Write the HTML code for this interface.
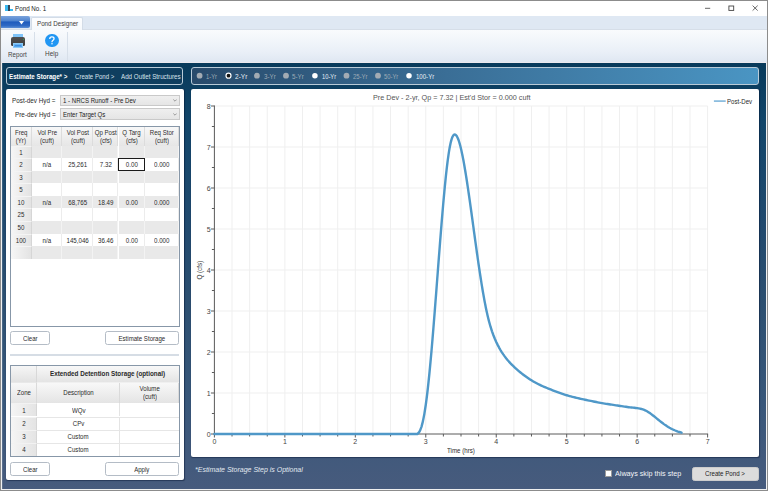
<!DOCTYPE html>
<html><head><meta charset="utf-8">
<style>
*{margin:0;padding:0;box-sizing:border-box}
html,body{width:768px;height:491px;overflow:hidden;background:#fff}
body{position:relative;font-family:"Liberation Sans",sans-serif;color:#333}
.a{position:absolute}
.t{position:absolute;white-space:nowrap;line-height:1;}
</style></head><body>
<div class="a" style="left:0.00px;top:0.00px;width:768.00px;height:491.00px;background:#8c8c8c"></div>
<div class="a" style="left:1.00px;top:1.00px;width:766.00px;height:489.00px;background:#f2f2f2"></div>
<div class="a" style="left:1.00px;top:1.00px;width:766.00px;height:15.00px;background:#fff"></div>
<div class="a" style="left:5.00px;top:5.00px;width:3.00px;height:6.00px;background:#3ab8ee"></div>
<div class="a" style="left:8.00px;top:5.00px;width:1.50px;height:6.00px;background:#33475a"></div>
<div class="a" style="left:9.50px;top:9.00px;width:3.00px;height:2.00px;background:#3ab8ee"></div>
<svg class="a" style="left:700px;top:0" width="68" height="16"><path d="M5 8.3H10.2" stroke="#555" stroke-width="0.9"/><rect x="28.9" y="6" width="4.8" height="4.4" fill="none" stroke="#444" stroke-width="0.9"/><path d="M52.6 5.6L57.7 10.6M57.7 5.6L52.6 10.6" stroke="#444" stroke-width="0.8"/></svg>
<div class="a" style="left:1.00px;top:16.00px;width:766.00px;height:13.00px;background:#dfe8f3"></div>
<div class="a" style="left:1.00px;top:16.00px;width:29.00px;height:12.30px;border-radius:0 2px 2px 0;background:linear-gradient(#7aa3dc 0%,#4f84cf 40%,#1e5bbd 50%,#2e69c4 80%,#5d8fd6 100%)"></div>
<svg class="a" style="left:18.5px;top:20.5px" width="5" height="4" viewBox="0 0 5 4"><path d="M0 0H5L2.5 3.5Z" fill="#fff"/></svg>
<div class="a" style="left:1.00px;top:29.00px;width:766.00px;height:33.00px;background:linear-gradient(#f9fbfd,#e9eff7 70%,#dfe7f2);border-top:1px solid #d6dee8"></div>
<div class="a" style="left:31.30px;top:16.60px;width:51.80px;height:13.40px;background:linear-gradient(#fdfeff,#f6f9fc);border:1px solid #d3dce7;border-bottom:none;border-radius:2px 2px 0 0"></div>
<div class="a" style="left:1.00px;top:61.50px;width:766.00px;height:1.50px;background:#ebe9ee"></div>
<div class="a" style="left:34.00px;top:32.00px;width:1.00px;height:29.00px;background:#d7dfe9"></div>
<div class="a" style="left:67.00px;top:32.00px;width:1.00px;height:29.00px;background:#d7dfe9"></div>
<div class="a" style="left:13.30px;top:34.10px;width:9.40px;height:4.20px;background:#80c4f8"></div>
<div class="a" style="left:10.90px;top:37.40px;width:14.25px;height:8.30px;background:linear-gradient(#505050,#3e3e3e);border-radius:2px 2px 1.5px 1.5px"></div>
<div class="a" style="left:23.00px;top:39.00px;width:1.10px;height:1.10px;background:#2fb050;border-radius:50%"></div>
<div class="a" style="left:13.10px;top:42.80px;width:9.80px;height:4.90px;background:linear-gradient(#6fb8f4,#4f9fea);border:0.6px solid #8ccbf8"></div>
<div class="a" style="left:14.80px;top:44.60px;width:6.40px;height:0.80px;background:#3d8fe0"></div>
<div class="a" style="left:45px;top:33.5px;width:13.6px;height:13.6px;border-radius:50%;background:#2196f3"></div>
<svg class="a" style="left:40px;top:30px" width="24" height="20" viewBox="40 30 24 20"><path d="M49.75 38.9C49.75 37.5 50.6 36.95 51.9 36.95C53.2 36.95 54.05 37.65 54.05 38.75C54.05 40 52 40.35 52 41.7V42.3" fill="none" stroke="#fff" stroke-width="1.25"/><circle cx="52" cy="43.85" r="0.75" fill="#fff"/></svg>
<div class="a" style="left:2.00px;top:63.00px;width:764.00px;height:425.70px;background:linear-gradient(#083a5b 0%,#12466a 14%,#224a6e 39%,#2c4f70 55%,#38577a 79%,#475b7d 100%)"></div>
<div class="a" style="left:2.00px;top:63.00px;width:1.00px;height:425.70px;background:rgba(255,255,255,0.13)"></div>
<div class="a" style="left:1.00px;top:488.70px;width:766.00px;height:1.00px;background:#f0f0f0"></div>
<div class="a" style="left:6.30px;top:67.20px;width:177.20px;height:17.90px;border:1px solid #b9cbd8;border-radius:3px;background:#0f3e5f"></div>
<div class="a" style="left:190.60px;top:67.10px;width:568.80px;height:18.00px;border:1px solid #b9cbd8;border-radius:3px;background:linear-gradient(90deg,#284a6b,#3a6e96 45%,#4a95c3)"></div>
<svg class="a" style="left:0;top:0" width="768" height="491"><circle cx="199.6" cy="75.7" r="2.9" fill="#a3abb3"/><circle cx="228.5" cy="75.7" r="2.5" fill="#151515" stroke="#fff" stroke-width="1.2"/><circle cx="256.9" cy="75.7" r="2.9" fill="#a3abb3"/><circle cx="286.0" cy="75.7" r="2.9" fill="#a3abb3"/><circle cx="314.9" cy="75.7" r="2.75" fill="#fff"/><circle cx="346.5" cy="75.7" r="2.9" fill="#a3abb3"/><circle cx="378.0" cy="75.7" r="2.9" fill="#a3abb3"/><circle cx="409.0" cy="75.7" r="2.75" fill="#fff"/></svg>
<div class="a" style="left:6.00px;top:89.00px;width:177.90px;height:391.40px;background:#fff;border-radius:2px;box-shadow:0.5px 0.6px 1px rgba(0,15,45,0.45)"></div>
<div class="a" style="left:190.90px;top:89.00px;width:568.10px;height:368.40px;background:#fff;border-radius:2px;box-shadow:0.5px 0.6px 1px rgba(0,15,45,0.45)"></div>
<div class="a" style="left:59.50px;top:94.80px;width:120.40px;height:11.10px;background:linear-gradient(#efefef,#e5e5e5);border:1px solid #c9c9c9"></div>
<svg class="a" style="left:172.5px;top:98.85px" width="4" height="3" viewBox="0 0 4 3"><path d="M0.3 0.5L2 2.2L3.7 0.5" fill="none" stroke="#777" stroke-width="0.7"/></svg>
<div class="a" style="left:59.50px;top:108.30px;width:120.40px;height:11.50px;background:linear-gradient(#efefef,#e5e5e5);border:1px solid #c9c9c9"></div>
<svg class="a" style="left:172.5px;top:112.55px" width="4" height="3" viewBox="0 0 4 3"><path d="M0.3 0.5L2 2.2L3.7 0.5" fill="none" stroke="#777" stroke-width="0.7"/></svg>
<div class="a" style="left:10.60px;top:126.00px;width:168.90px;height:201.00px;background:#fff"></div>
<div class="a" style="left:11.10px;top:127.00px;width:20.60px;height:18.60px;background:linear-gradient(#f8f8f8,#e6e6e6);border-right:1px solid #dcdcdc"></div>
<div class="a" style="left:31.70px;top:127.00px;width:30.60px;height:18.60px;background:linear-gradient(#f8f8f8,#e6e6e6);border-right:1px solid #dcdcdc"></div>
<div class="a" style="left:62.30px;top:127.00px;width:30.40px;height:18.60px;background:linear-gradient(#f8f8f8,#e6e6e6);border-right:1px solid #dcdcdc"></div>
<div class="a" style="left:92.70px;top:127.00px;width:25.80px;height:18.60px;background:linear-gradient(#f8f8f8,#e6e6e6);border-right:1px solid #dcdcdc"></div>
<div class="a" style="left:118.50px;top:127.00px;width:26.50px;height:18.60px;background:linear-gradient(#f8f8f8,#e6e6e6);border-right:1px solid #dcdcdc"></div>
<div class="a" style="left:145.00px;top:127.00px;width:34.00px;height:18.60px;background:linear-gradient(#f8f8f8,#e6e6e6);border-right:1px solid #dcdcdc"></div>
<div class="a" style="left:11.00px;top:145.60px;width:20.70px;height:12.57px;background:linear-gradient(90deg,#f6f6f6,#e3e3e3);border-right:1px solid #d6d6d6;border-top:1px solid #f4f4f4"></div>
<div class="a" style="left:31.70px;top:145.60px;width:30.60px;height:12.57px;background:#e9e9e9;border-right:1px solid #f3f3f3"></div>
<div class="a" style="left:62.30px;top:145.60px;width:30.40px;height:12.57px;background:#e9e9e9;border-right:1px solid #f3f3f3"></div>
<div class="a" style="left:92.70px;top:145.60px;width:25.80px;height:12.57px;background:#e9e9e9;border-right:1px solid #f3f3f3"></div>
<div class="a" style="left:118.50px;top:145.60px;width:26.50px;height:12.57px;background:#e9e9e9;border-right:1px solid #f3f3f3"></div>
<div class="a" style="left:145.00px;top:145.60px;width:34.00px;height:12.57px;background:#e9e9e9;border-right:1px solid #f3f3f3"></div>
<div class="a" style="left:11.00px;top:158.17px;width:20.70px;height:12.57px;background:linear-gradient(90deg,#f6f6f6,#e3e3e3);border-right:1px solid #d6d6d6;border-top:1px solid #f4f4f4"></div>
<div class="a" style="left:31.70px;top:158.17px;width:30.60px;height:12.57px;background:#fff;border-right:1px solid #ececec"></div>
<div class="a" style="left:62.30px;top:158.17px;width:30.40px;height:12.57px;background:#fff;border-right:1px solid #ececec"></div>
<div class="a" style="left:92.70px;top:158.17px;width:25.80px;height:12.57px;background:#fff;border-right:1px solid #ececec"></div>
<div class="a" style="left:118.50px;top:158.17px;width:26.50px;height:12.57px;background:#fff;border-right:1px solid #ececec"></div>
<div class="a" style="left:145.00px;top:158.17px;width:34.00px;height:12.57px;background:#fff;border-right:1px solid #ececec"></div>
<div class="a" style="left:11.00px;top:170.74px;width:20.70px;height:12.57px;background:linear-gradient(90deg,#f6f6f6,#e3e3e3);border-right:1px solid #d6d6d6;border-top:1px solid #f4f4f4"></div>
<div class="a" style="left:31.70px;top:170.74px;width:30.60px;height:12.57px;background:#e9e9e9;border-right:1px solid #f3f3f3"></div>
<div class="a" style="left:62.30px;top:170.74px;width:30.40px;height:12.57px;background:#e9e9e9;border-right:1px solid #f3f3f3"></div>
<div class="a" style="left:92.70px;top:170.74px;width:25.80px;height:12.57px;background:#e9e9e9;border-right:1px solid #f3f3f3"></div>
<div class="a" style="left:118.50px;top:170.74px;width:26.50px;height:12.57px;background:#e9e9e9;border-right:1px solid #f3f3f3"></div>
<div class="a" style="left:145.00px;top:170.74px;width:34.00px;height:12.57px;background:#e9e9e9;border-right:1px solid #f3f3f3"></div>
<div class="a" style="left:11.00px;top:183.31px;width:20.70px;height:12.57px;background:linear-gradient(90deg,#f6f6f6,#e3e3e3);border-right:1px solid #d6d6d6;border-top:1px solid #f4f4f4"></div>
<div class="a" style="left:31.70px;top:183.31px;width:30.60px;height:12.57px;background:#fff;border-right:1px solid #ececec"></div>
<div class="a" style="left:62.30px;top:183.31px;width:30.40px;height:12.57px;background:#fff;border-right:1px solid #ececec"></div>
<div class="a" style="left:92.70px;top:183.31px;width:25.80px;height:12.57px;background:#fff;border-right:1px solid #ececec"></div>
<div class="a" style="left:118.50px;top:183.31px;width:26.50px;height:12.57px;background:#fff;border-right:1px solid #ececec"></div>
<div class="a" style="left:145.00px;top:183.31px;width:34.00px;height:12.57px;background:#fff;border-right:1px solid #ececec"></div>
<div class="a" style="left:11.00px;top:195.88px;width:20.70px;height:12.57px;background:linear-gradient(90deg,#f6f6f6,#e3e3e3);border-right:1px solid #d6d6d6;border-top:1px solid #f4f4f4"></div>
<div class="a" style="left:31.70px;top:195.88px;width:30.60px;height:12.57px;background:#e9e9e9;border-right:1px solid #f3f3f3"></div>
<div class="a" style="left:62.30px;top:195.88px;width:30.40px;height:12.57px;background:#e9e9e9;border-right:1px solid #f3f3f3"></div>
<div class="a" style="left:92.70px;top:195.88px;width:25.80px;height:12.57px;background:#e9e9e9;border-right:1px solid #f3f3f3"></div>
<div class="a" style="left:118.50px;top:195.88px;width:26.50px;height:12.57px;background:#e9e9e9;border-right:1px solid #f3f3f3"></div>
<div class="a" style="left:145.00px;top:195.88px;width:34.00px;height:12.57px;background:#e9e9e9;border-right:1px solid #f3f3f3"></div>
<div class="a" style="left:11.00px;top:208.45px;width:20.70px;height:12.57px;background:linear-gradient(90deg,#f6f6f6,#e3e3e3);border-right:1px solid #d6d6d6;border-top:1px solid #f4f4f4"></div>
<div class="a" style="left:31.70px;top:208.45px;width:30.60px;height:12.57px;background:#fff;border-right:1px solid #ececec"></div>
<div class="a" style="left:62.30px;top:208.45px;width:30.40px;height:12.57px;background:#fff;border-right:1px solid #ececec"></div>
<div class="a" style="left:92.70px;top:208.45px;width:25.80px;height:12.57px;background:#fff;border-right:1px solid #ececec"></div>
<div class="a" style="left:118.50px;top:208.45px;width:26.50px;height:12.57px;background:#fff;border-right:1px solid #ececec"></div>
<div class="a" style="left:145.00px;top:208.45px;width:34.00px;height:12.57px;background:#fff;border-right:1px solid #ececec"></div>
<div class="a" style="left:11.00px;top:221.02px;width:20.70px;height:12.57px;background:linear-gradient(90deg,#f6f6f6,#e3e3e3);border-right:1px solid #d6d6d6;border-top:1px solid #f4f4f4"></div>
<div class="a" style="left:31.70px;top:221.02px;width:30.60px;height:12.57px;background:#e9e9e9;border-right:1px solid #f3f3f3"></div>
<div class="a" style="left:62.30px;top:221.02px;width:30.40px;height:12.57px;background:#e9e9e9;border-right:1px solid #f3f3f3"></div>
<div class="a" style="left:92.70px;top:221.02px;width:25.80px;height:12.57px;background:#e9e9e9;border-right:1px solid #f3f3f3"></div>
<div class="a" style="left:118.50px;top:221.02px;width:26.50px;height:12.57px;background:#e9e9e9;border-right:1px solid #f3f3f3"></div>
<div class="a" style="left:145.00px;top:221.02px;width:34.00px;height:12.57px;background:#e9e9e9;border-right:1px solid #f3f3f3"></div>
<div class="a" style="left:11.00px;top:233.59px;width:20.70px;height:12.57px;background:linear-gradient(90deg,#f6f6f6,#e3e3e3);border-right:1px solid #d6d6d6;border-top:1px solid #f4f4f4"></div>
<div class="a" style="left:31.70px;top:233.59px;width:30.60px;height:12.57px;background:#fff;border-right:1px solid #ececec"></div>
<div class="a" style="left:62.30px;top:233.59px;width:30.40px;height:12.57px;background:#fff;border-right:1px solid #ececec"></div>
<div class="a" style="left:92.70px;top:233.59px;width:25.80px;height:12.57px;background:#fff;border-right:1px solid #ececec"></div>
<div class="a" style="left:118.50px;top:233.59px;width:26.50px;height:12.57px;background:#fff;border-right:1px solid #ececec"></div>
<div class="a" style="left:145.00px;top:233.59px;width:34.00px;height:12.57px;background:#fff;border-right:1px solid #ececec"></div>
<div class="a" style="left:11.00px;top:246.16px;width:20.70px;height:12.57px;background:linear-gradient(90deg,#f6f6f6,#e3e3e3);border-right:1px solid #d6d6d6;border-top:1px solid #f4f4f4"></div>
<div class="a" style="left:31.70px;top:246.16px;width:30.60px;height:12.57px;background:#e9e9e9;border-right:1px solid #f3f3f3"></div>
<div class="a" style="left:62.30px;top:246.16px;width:30.40px;height:12.57px;background:#e9e9e9;border-right:1px solid #f3f3f3"></div>
<div class="a" style="left:92.70px;top:246.16px;width:25.80px;height:12.57px;background:#e9e9e9;border-right:1px solid #f3f3f3"></div>
<div class="a" style="left:118.50px;top:246.16px;width:26.50px;height:12.57px;background:#e9e9e9;border-right:1px solid #f3f3f3"></div>
<div class="a" style="left:145.00px;top:246.16px;width:34.00px;height:12.57px;background:#e9e9e9;border-right:1px solid #f3f3f3"></div>
<div class="a" style="left:10.00px;top:126.00px;width:170.00px;height:201.00px;border:1px solid #8797a8"></div>
<div class="a" style="left:118.40px;top:158.00px;width:26.90px;height:13.30px;border:1.5px solid #1a1a1a"></div>
<div class="a" style="left:10.30px;top:331.20px;width:39.40px;height:13.50px;background:#fff;border:1px solid #b4bcc6;border-radius:2.5px"></div>
<div class="a" style="left:105.00px;top:331.20px;width:74.40px;height:13.50px;background:#fff;border:1px solid #b4bcc6;border-radius:2.5px"></div>
<div class="a" style="left:10.20px;top:354.20px;width:169.20px;height:2.10px;background:#d6dde5"></div>
<div class="a" style="left:10.40px;top:365.00px;width:169.10px;height:91.90px;background:#fff"></div>
<div class="a" style="left:10.90px;top:365.50px;width:25.70px;height:17.10px;background:linear-gradient(#f6f6f6,#e2e2e2);border-right:1px solid #d8d8d8;border-bottom:1px solid #e8e8e8"></div>
<div class="a" style="left:36.60px;top:365.50px;width:142.40px;height:17.10px;background:linear-gradient(#f8f8f8,#e4e4e4);border-bottom:1px solid #f0f0f0"></div>
<div class="a" style="left:10.90px;top:382.60px;width:25.70px;height:20.80px;background:linear-gradient(#f8f8f8,#e4e4e4);border-right:1px solid #dadada"></div>
<div class="a" style="left:36.60px;top:382.60px;width:83.80px;height:20.80px;background:linear-gradient(#f8f8f8,#e4e4e4);border-right:1px solid #dadada"></div>
<div class="a" style="left:120.40px;top:382.60px;width:58.60px;height:20.80px;background:linear-gradient(#f8f8f8,#e4e4e4);border-right:1px solid #dadada"></div>
<div class="a" style="left:10.90px;top:403.40px;width:25.70px;height:13.10px;background:linear-gradient(90deg,#f5f5f5,#e4e4e4);border-right:1px solid #d6d6d6;border-top:1px solid #f2f2f2"></div>
<div class="a" style="left:36.60px;top:403.40px;width:83.80px;height:13.10px;border-right:1px solid #e4e4e4"></div>
<div class="a" style="left:10.90px;top:416.50px;width:25.70px;height:13.10px;background:linear-gradient(90deg,#f5f5f5,#e4e4e4);border-right:1px solid #d6d6d6;border-top:1px solid #f2f2f2"></div>
<div class="a" style="left:36.60px;top:416.50px;width:83.80px;height:13.10px;border-right:1px solid #e4e4e4;border-top:1px solid #e6e6e6"></div>
<div class="a" style="left:120.40px;top:416.50px;width:58.60px;height:13.10px;border-top:1px solid #e6e6e6"></div>
<div class="a" style="left:10.90px;top:429.60px;width:25.70px;height:13.10px;background:linear-gradient(90deg,#f5f5f5,#e4e4e4);border-right:1px solid #d6d6d6;border-top:1px solid #f2f2f2"></div>
<div class="a" style="left:36.60px;top:429.60px;width:83.80px;height:13.10px;border-right:1px solid #e4e4e4;border-top:1px solid #e6e6e6"></div>
<div class="a" style="left:120.40px;top:429.60px;width:58.60px;height:13.10px;border-top:1px solid #e6e6e6"></div>
<div class="a" style="left:10.90px;top:442.70px;width:25.70px;height:13.70px;background:linear-gradient(90deg,#f5f5f5,#e4e4e4);border-right:1px solid #d6d6d6;border-top:1px solid #f2f2f2"></div>
<div class="a" style="left:36.60px;top:442.70px;width:83.80px;height:13.10px;border-right:1px solid #e4e4e4;border-top:1px solid #e6e6e6"></div>
<div class="a" style="left:120.40px;top:442.70px;width:58.60px;height:13.10px;border-top:1px solid #e6e6e6"></div>
<div class="a" style="left:10.00px;top:365.00px;width:170.00px;height:92.00px;border:1px solid #8797a8"></div>
<div class="a" style="left:10.30px;top:462.40px;width:39.40px;height:13.20px;background:#fff;border:1px solid #b4bcc6;border-radius:2.5px"></div>
<div class="a" style="left:105.00px;top:462.40px;width:74.40px;height:13.20px;background:#fff;border:1px solid #b4bcc6;border-radius:2.5px"></div>
<svg class="a" style="left:0;top:0" width="768" height="491"><path d="M232.02 106.00V434.00 M249.63 106.00V434.00 M267.25 106.00V434.00 M284.86 106.00V434.00 M302.48 106.00V434.00 M320.09 106.00V434.00 M337.70 106.00V434.00 M355.32 106.00V434.00 M372.94 106.00V434.00 M390.55 106.00V434.00 M408.16 106.00V434.00 M425.78 106.00V434.00 M443.39 106.00V434.00 M461.01 106.00V434.00 M478.62 106.00V434.00 M496.24 106.00V434.00 M513.86 106.00V434.00 M531.47 106.00V434.00 M549.08 106.00V434.00 M566.70 106.00V434.00 M584.31 106.00V434.00 M601.93 106.00V434.00 M619.54 106.00V434.00 M637.16 106.00V434.00 M654.77 106.00V434.00 M672.39 106.00V434.00 M690.00 106.00V434.00 M707.62 106.00V434.00 M214.40 393.00H707.62 M214.40 352.00H707.62 M214.40 311.00H707.62 M214.40 270.00H707.62 M214.40 229.00H707.62 M214.40 188.00H707.62 M214.40 147.00H707.62 M214.40 106.00H707.62" stroke="#efefef" stroke-width="1" fill="none"/><path d="M214.40 105.50V434.50 M213.90 434.00H708.12 M214.40 434.00v3.5 M232.02 434.00v2.5 M249.63 434.00v2.5 M267.25 434.00v2.5 M284.86 434.00v3.5 M302.48 434.00v2.5 M320.09 434.00v2.5 M337.70 434.00v2.5 M355.32 434.00v3.5 M372.94 434.00v2.5 M390.55 434.00v2.5 M408.16 434.00v2.5 M425.78 434.00v3.5 M443.39 434.00v2.5 M461.01 434.00v2.5 M478.62 434.00v2.5 M496.24 434.00v3.5 M513.86 434.00v2.5 M531.47 434.00v2.5 M549.08 434.00v2.5 M566.70 434.00v3.5 M584.31 434.00v2.5 M601.93 434.00v2.5 M619.54 434.00v2.5 M637.16 434.00v3.5 M654.77 434.00v2.5 M672.39 434.00v2.5 M690.00 434.00v2.5 M707.62 434.00v3.5 M214.40 434.00h-3.5 M214.40 413.50h-2.5 M214.40 393.00h-3.5 M214.40 372.50h-2.5 M214.40 352.00h-3.5 M214.40 331.50h-2.5 M214.40 311.00h-3.5 M214.40 290.50h-2.5 M214.40 270.00h-3.5 M214.40 249.50h-2.5 M214.40 229.00h-3.5 M214.40 208.50h-2.5 M214.40 188.00h-3.5 M214.40 167.50h-2.5 M214.40 147.00h-3.5 M214.40 126.50h-2.5 M214.40 106.00h-3.5" stroke="#5a5a5a" stroke-width="1" fill="none"/><path d="M214.4 434.0 L397.60 433.99 L399.01 433.98 L400.41 433.97 L401.82 433.97 L403.23 433.97 L404.64 433.99 L406.05 434.00 L407.46 434.00 L408.87 434.00 L410.28 434.00 L411.69 434.00 L413.10 434.00 L414.51 434.00 L415.92 434.00 L417.32 434.00 L418.73 432.77 L420.14 430.39 L421.55 426.58 L422.96 421.13 L424.37 413.87 L425.78 404.78 L426.20 401.69 L426.63 398.45 L427.05 395.06 L427.47 391.51 L427.89 387.81 L428.32 383.96 L428.74 379.97 L429.16 375.84 L429.58 371.58 L430.01 367.19 L430.43 362.68 L430.85 358.05 L431.28 353.32 L431.70 348.48 L432.12 343.55 L432.54 338.53 L432.97 333.43 L433.39 328.25 L433.81 323.01 L434.24 317.71 L434.66 312.35 L435.08 306.95 L435.50 301.51 L435.93 296.04 L436.35 290.54 L436.77 285.02 L437.19 279.49 L437.62 273.97 L438.04 268.44 L438.46 262.93 L438.89 257.43 L439.31 251.97 L439.73 246.54 L440.15 241.15 L440.58 235.81 L441.00 230.52 L441.42 225.31 L441.84 220.16 L442.27 215.10 L442.69 210.12 L443.11 205.24 L443.54 200.47 L443.96 195.81 L444.38 191.27 L444.80 186.85 L445.23 182.57 L445.65 178.44 L446.07 174.46 L446.50 170.63 L446.92 166.98 L447.34 163.49 L447.76 160.18 L448.19 157.07 L448.61 154.14 L449.03 151.41 L449.45 148.88 L449.88 146.56 L450.30 144.44 L450.72 142.54 L451.15 140.85 L451.57 139.38 L451.99 138.11 L452.41 137.05 L452.84 136.19 L453.26 135.51 L453.68 135.01 L454.10 134.68 L454.53 134.52 L454.95 134.52 L455.37 134.67 L455.80 134.97 L456.22 135.41 L456.64 135.98 L457.06 136.68 L457.49 137.51 L457.91 138.46 L458.33 139.52 L458.76 140.70 L459.18 142.00 L459.60 143.40 L460.02 144.90 L460.45 146.51 L460.87 148.22 L461.29 150.02 L461.71 151.91 L462.14 153.90 L462.56 155.96 L462.98 158.11 L463.41 160.33 L463.83 162.63 L464.25 165.00 L464.67 167.43 L465.10 169.93 L465.52 172.49 L465.94 175.11 L466.36 177.78 L466.79 180.50 L467.21 183.26 L467.63 186.07 L468.06 188.92 L468.48 191.80 L468.90 194.72 L469.32 197.67 L469.75 200.65 L470.17 203.65 L470.59 206.67 L471.02 209.71 L471.44 212.77 L471.86 215.85 L472.28 218.93 L472.71 222.02 L473.13 225.11 L473.55 228.21 L473.97 231.31 L474.40 234.40 L474.82 237.48 L475.24 240.56 L475.67 243.62 L476.09 246.67 L476.51 249.70 L476.93 252.71 L477.36 255.70 L477.78 258.67 L478.20 261.60 L478.62 264.51 L479.05 267.38 L479.47 270.22 L479.89 273.02 L480.32 275.78 L480.74 278.50 L481.16 281.18 L481.58 283.82 L482.01 286.41 L482.43 288.95 L482.85 291.45 L483.28 293.89 L483.70 296.29 L484.12 298.62 L484.54 300.91 L484.97 303.13 L485.39 305.30 L485.81 307.40 L486.23 309.44 L486.66 311.42 L487.08 313.34 L487.50 315.20 L487.93 316.99 L488.35 318.72 L488.77 320.39 L489.19 322.00 L490.60 326.96 L492.01 331.36 L493.42 335.28 L494.83 338.78 L496.24 341.95 L497.65 344.86 L499.06 347.54 L500.47 350.01 L501.88 352.30 L503.29 354.42 L504.70 356.39 L506.10 358.23 L507.51 359.95 L508.92 361.57 L510.33 363.09 L511.74 364.54 L513.15 365.93 L514.56 367.27 L515.97 368.57 L517.38 369.83 L518.79 371.05 L520.20 372.24 L521.61 373.38 L523.01 374.49 L524.42 375.56 L525.83 376.59 L527.24 377.58 L528.65 378.54 L530.06 379.46 L531.47 380.35 L532.88 381.20 L534.29 382.01 L535.70 382.79 L537.11 383.54 L538.52 384.26 L539.93 384.95 L541.33 385.60 L542.74 386.23 L544.15 386.84 L545.56 387.43 L546.97 388.01 L548.38 388.58 L549.79 389.15 L551.20 389.71 L552.61 390.26 L554.02 390.81 L555.43 391.35 L556.84 391.88 L558.24 392.40 L559.65 392.91 L561.06 393.40 L562.47 393.89 L563.88 394.35 L565.29 394.80 L566.70 395.24 L568.11 395.66 L569.52 396.06 L570.93 396.44 L572.34 396.81 L573.75 397.17 L575.16 397.51 L576.56 397.85 L577.97 398.17 L579.38 398.49 L580.79 398.80 L582.20 399.11 L583.61 399.41 L585.02 399.71 L586.43 400.01 L587.84 400.31 L589.25 400.61 L590.66 400.90 L592.07 401.19 L593.47 401.48 L594.88 401.76 L596.29 402.04 L597.70 402.31 L599.11 402.58 L600.52 402.84 L601.93 403.09 L603.34 403.34 L604.75 403.58 L606.16 403.81 L607.57 404.03 L608.98 404.25 L610.39 404.47 L611.79 404.68 L613.20 404.89 L614.61 405.10 L616.02 405.32 L617.43 405.53 L618.84 405.74 L620.25 405.96 L621.66 406.17 L623.07 406.39 L624.48 406.60 L625.89 406.81 L627.30 407.01 L628.70 407.19 L630.11 407.36 L631.52 407.51 L632.93 407.65 L634.34 407.79 L635.75 407.95 L637.16 408.13 L638.57 408.35 L639.98 408.62 L641.39 408.96 L642.80 409.38 L644.21 409.90 L645.62 410.54 L647.02 411.29 L648.43 412.15 L649.84 413.10 L651.25 414.11 L652.66 415.19 L654.07 416.30 L655.48 417.43 L656.89 418.58 L658.30 419.72 L659.71 420.86 L661.12 421.97 L662.53 423.06 L663.93 424.11 L665.34 425.11 L666.75 426.06 L668.16 426.96 L669.57 427.79 L670.98 428.57 L672.39 429.28 L673.80 429.92 L675.21 430.50 L676.62 431.03 L678.03 431.53 L679.44 431.99 L680.85 432.44 L681.55 432.66" stroke="#4f98c8" stroke-width="2.4" fill="none" stroke-linejoin="round" stroke-linecap="round"/><path d="M713.9 101.1H725.7" stroke="#7fb6dc" stroke-width="1.6"/></svg>
<div class="a" style="left:604.70px;top:469.70px;width:7.00px;height:6.90px;background:#fff;border:1px solid #9a9a9a"></div>
<div class="a" style="left:692.10px;top:466.60px;width:67.00px;height:14.90px;background:#dcdcdc;border:1px solid #cccccc;border-radius:2.5px"></div>
<div class="t" style="left:15.10px;transform:scaleX(0.8934);transform-origin:0 0;top:5px;font-size:7px;letter-spacing:0.000px;color:#1a1a1a;font-weight:normal;font-style:normal;">Pond No. 1</div>
<div class="t" style="left:36.70px;transform:scaleX(0.8893);transform-origin:0 0;top:20px;font-size:7px;letter-spacing:0.000px;color:#3a3a3a;font-weight:normal;font-style:normal;">Pond Designer</div>
<div class="t" style="left:8.20px;transform:scaleX(0.8942);transform-origin:0 0;top:51px;font-size:7px;letter-spacing:0.000px;color:#444;font-weight:normal;font-style:normal;">Report</div>
<div class="t" style="left:44.88px;transform:scaleX(0.9202);transform-origin:0 0;top:50px;font-size:7px;letter-spacing:0.000px;color:#444;font-weight:normal;font-style:normal;">Help</div>
<div class="t" style="left:9.38px;transform:scaleX(0.8846);transform-origin:0 0;top:73px;font-size:7px;letter-spacing:0.000px;color:#fff;font-weight:bold;font-style:normal;">Estimate Storage* &gt;</div>
<div class="t" style="left:74.50px;transform:scaleX(0.8684);transform-origin:0 0;top:73px;font-size:7px;letter-spacing:0.000px;color:#d8e2ec;font-weight:normal;font-style:normal;">Create Pond &gt;</div>
<div class="t" style="left:121.20px;transform:scaleX(0.8904);transform-origin:0 0;top:73px;font-size:7px;letter-spacing:0.000px;color:#d8e2ec;font-weight:normal;font-style:normal;">Add Outlet Structures</div>
<div class="t" style="left:206.49px;transform:scaleX(0.8808);transform-origin:0 0;top:74px;font-size:6.6px;letter-spacing:0.000px;color:#9eabb6;font-weight:normal;font-style:normal;">1-Yr</div>
<div class="t" style="left:234.67px;transform:scaleX(0.9956);transform-origin:0 0;top:74px;font-size:6.6px;letter-spacing:0.000px;color:#e6eef5;font-weight:normal;font-style:normal;">2-Yr</div>
<div class="t" style="left:263.81px;transform:scaleX(0.9438);transform-origin:0 0;top:74px;font-size:6.6px;letter-spacing:0.000px;color:#9eabb6;font-weight:normal;font-style:normal;">3-Yr</div>
<div class="t" style="left:292.25px;transform:scaleX(0.9490);transform-origin:0 0;top:74px;font-size:6.6px;letter-spacing:0.000px;color:#9eabb6;font-weight:normal;font-style:normal;">5-Yr</div>
<div class="t" style="left:321.79px;transform:scaleX(0.8787);transform-origin:0 0;top:74px;font-size:6.6px;letter-spacing:0.000px;color:#e6eef5;font-weight:normal;font-style:normal;">10-Yr</div>
<div class="t" style="left:352.60px;transform:scaleX(0.9031);transform-origin:0 0;top:74px;font-size:6.6px;letter-spacing:0.000px;color:#9eabb6;font-weight:normal;font-style:normal;">25-Yr</div>
<div class="t" style="left:384.17px;transform:scaleX(0.8867);transform-origin:0 0;top:74px;font-size:6.6px;letter-spacing:0.000px;color:#9eabb6;font-weight:normal;font-style:normal;">50-Yr</div>
<div class="t" style="left:415.88px;transform:scaleX(0.9189);transform-origin:0 0;top:74px;font-size:6.6px;letter-spacing:0.000px;color:#e6eef5;font-weight:normal;font-style:normal;">100-Yr</div>
<div class="t" style="left:12.39px;transform:scaleX(0.9576);transform-origin:0 0;top:98px;font-size:6.6px;letter-spacing:0.000px;color:#2a2a2a;font-weight:normal;font-style:normal;">Post-dev Hyd =</div>
<div class="t" style="left:14.99px;transform:scaleX(0.9627);transform-origin:0 0;top:112px;font-size:6.6px;letter-spacing:0.000px;color:#2a2a2a;font-weight:normal;font-style:normal;">Pre-dev Hyd =</div>
<div class="t" style="left:62.77px;transform:scaleX(0.9219);transform-origin:0 0;top:98px;font-size:6.6px;letter-spacing:0.000px;color:#222;font-weight:normal;font-style:normal;">1 - NRCS Runoff - Pre Dev</div>
<div class="t" style="left:62.71px;transform:scaleX(0.9188);transform-origin:0 0;top:112px;font-size:6.6px;letter-spacing:0.000px;color:#222;font-weight:normal;font-style:normal;">Enter Target Qs</div>
<div class="t" style="left:13.95px;transform:scaleX(0.87);transform-origin:7.20px 0;top:129px;font-size:7px;letter-spacing:0.000px;color:#2e2e2e;font-weight:normal;font-style:normal;">Freq</div>
<div class="t" style="left:15.32px;transform:scaleX(0.87);transform-origin:5.83px 0;top:137px;font-size:7px;letter-spacing:0.000px;color:#2e2e2e;font-weight:normal;font-style:normal;">(Yr)</div>
<div class="t" style="left:35.72px;transform:scaleX(0.87);transform-origin:11.28px 0;top:129px;font-size:7px;letter-spacing:0.000px;color:#2e2e2e;font-weight:normal;font-style:normal;">Vol Pre</div>
<div class="t" style="left:39.03px;transform:scaleX(0.87);transform-origin:7.97px 0;top:137px;font-size:7px;letter-spacing:0.000px;color:#2e2e2e;font-weight:normal;font-style:normal;">(cuft)</div>
<div class="t" style="left:64.66px;transform:scaleX(0.87);transform-origin:12.84px 0;top:129px;font-size:7px;letter-spacing:0.000px;color:#2e2e2e;font-weight:normal;font-style:normal;">Vol Post</div>
<div class="t" style="left:69.53px;transform:scaleX(0.87);transform-origin:7.97px 0;top:137px;font-size:7px;letter-spacing:0.000px;color:#2e2e2e;font-weight:normal;font-style:normal;">(cuft)</div>
<div class="t" style="left:92.96px;transform:scaleX(0.87);transform-origin:12.64px 0;top:129px;font-size:7px;letter-spacing:0.000px;color:#2e2e2e;font-weight:normal;font-style:normal;">Qp Post</div>
<div class="t" style="left:98.80px;transform:scaleX(0.87);transform-origin:6.80px 0;top:137px;font-size:7px;letter-spacing:0.000px;color:#2e2e2e;font-weight:normal;font-style:normal;">(cfs)</div>
<div class="t" style="left:121.25px;transform:scaleX(0.87);transform-origin:10.50px 0;top:129px;font-size:7px;letter-spacing:0.000px;color:#2e2e2e;font-weight:normal;font-style:normal;">Q Targ</div>
<div class="t" style="left:124.95px;transform:scaleX(0.87);transform-origin:6.80px 0;top:137px;font-size:7px;letter-spacing:0.000px;color:#2e2e2e;font-weight:normal;font-style:normal;">(cfs)</div>
<div class="t" style="left:148.44px;transform:scaleX(0.87);transform-origin:13.81px 0;top:129px;font-size:7px;letter-spacing:0.000px;color:#2e2e2e;font-weight:normal;font-style:normal;">Req Stor</div>
<div class="t" style="left:154.28px;transform:scaleX(0.87);transform-origin:7.97px 0;top:137px;font-size:7px;letter-spacing:0.000px;color:#2e2e2e;font-weight:normal;font-style:normal;">(cuft)</div>
<div class="t" style="left:19.20px;transform:scaleX(0.88);transform-origin:1.95px 0;top:149px;font-size:7px;letter-spacing:0.000px;color:#2a2a2a;font-weight:normal;font-style:normal;">1</div>
<div class="t" style="left:19.20px;transform:scaleX(0.88);transform-origin:1.95px 0;top:161px;font-size:7px;letter-spacing:0.000px;color:#2a2a2a;font-weight:normal;font-style:normal;">2</div>
<div class="t" style="left:42.13px;transform:scaleX(0.88);transform-origin:4.87px 0;top:161px;font-size:7px;letter-spacing:0.000px;color:#2a2a2a;font-weight:normal;font-style:normal;">n/a</div>
<div class="t" style="left:66.79px;transform:scaleX(0.88);transform-origin:10.71px 0;top:161px;font-size:7px;letter-spacing:0.000px;color:#2a2a2a;font-weight:normal;font-style:normal;">25,261</div>
<div class="t" style="left:98.79px;transform:scaleX(0.88);transform-origin:6.81px 0;top:161px;font-size:7px;letter-spacing:0.000px;color:#2a2a2a;font-weight:normal;font-style:normal;">7.32</div>
<div class="t" style="left:124.94px;transform:scaleX(0.88);transform-origin:6.81px 0;top:161px;font-size:7px;letter-spacing:0.000px;color:#2a2a2a;font-weight:normal;font-style:normal;">0.00</div>
<div class="t" style="left:153.49px;transform:scaleX(0.88);transform-origin:8.76px 0;top:161px;font-size:7px;letter-spacing:0.000px;color:#2a2a2a;font-weight:normal;font-style:normal;">0.000</div>
<div class="t" style="left:19.20px;transform:scaleX(0.88);transform-origin:1.95px 0;top:174px;font-size:7px;letter-spacing:0.000px;color:#2a2a2a;font-weight:normal;font-style:normal;">3</div>
<div class="t" style="left:19.20px;transform:scaleX(0.88);transform-origin:1.95px 0;top:186px;font-size:7px;letter-spacing:0.000px;color:#2a2a2a;font-weight:normal;font-style:normal;">5</div>
<div class="t" style="left:17.26px;transform:scaleX(0.88);transform-origin:3.89px 0;top:199px;font-size:7px;letter-spacing:0.000px;color:#2a2a2a;font-weight:normal;font-style:normal;">10</div>
<div class="t" style="left:42.13px;transform:scaleX(0.88);transform-origin:4.87px 0;top:199px;font-size:7px;letter-spacing:0.000px;color:#2a2a2a;font-weight:normal;font-style:normal;">n/a</div>
<div class="t" style="left:66.79px;transform:scaleX(0.88);transform-origin:10.71px 0;top:199px;font-size:7px;letter-spacing:0.000px;color:#2a2a2a;font-weight:normal;font-style:normal;">68,765</div>
<div class="t" style="left:96.84px;transform:scaleX(0.88);transform-origin:8.76px 0;top:199px;font-size:7px;letter-spacing:0.000px;color:#2a2a2a;font-weight:normal;font-style:normal;">18.49</div>
<div class="t" style="left:124.94px;transform:scaleX(0.88);transform-origin:6.81px 0;top:199px;font-size:7px;letter-spacing:0.000px;color:#2a2a2a;font-weight:normal;font-style:normal;">0.00</div>
<div class="t" style="left:153.49px;transform:scaleX(0.88);transform-origin:8.76px 0;top:199px;font-size:7px;letter-spacing:0.000px;color:#2a2a2a;font-weight:normal;font-style:normal;">0.000</div>
<div class="t" style="left:17.26px;transform:scaleX(0.88);transform-origin:3.89px 0;top:211px;font-size:7px;letter-spacing:0.000px;color:#2a2a2a;font-weight:normal;font-style:normal;">25</div>
<div class="t" style="left:17.26px;transform:scaleX(0.88);transform-origin:3.89px 0;top:224px;font-size:7px;letter-spacing:0.000px;color:#2a2a2a;font-weight:normal;font-style:normal;">50</div>
<div class="t" style="left:15.31px;transform:scaleX(0.88);transform-origin:5.84px 0;top:237px;font-size:7px;letter-spacing:0.000px;color:#2a2a2a;font-weight:normal;font-style:normal;">100</div>
<div class="t" style="left:42.13px;transform:scaleX(0.88);transform-origin:4.87px 0;top:237px;font-size:7px;letter-spacing:0.000px;color:#2a2a2a;font-weight:normal;font-style:normal;">n/a</div>
<div class="t" style="left:64.85px;transform:scaleX(0.88);transform-origin:12.65px 0;top:237px;font-size:7px;letter-spacing:0.000px;color:#2a2a2a;font-weight:normal;font-style:normal;">145,046</div>
<div class="t" style="left:96.84px;transform:scaleX(0.88);transform-origin:8.76px 0;top:237px;font-size:7px;letter-spacing:0.000px;color:#2a2a2a;font-weight:normal;font-style:normal;">36.46</div>
<div class="t" style="left:124.94px;transform:scaleX(0.88);transform-origin:6.81px 0;top:237px;font-size:7px;letter-spacing:0.000px;color:#2a2a2a;font-weight:normal;font-style:normal;">0.00</div>
<div class="t" style="left:153.49px;transform:scaleX(0.88);transform-origin:8.76px 0;top:237px;font-size:7px;letter-spacing:0.000px;color:#2a2a2a;font-weight:normal;font-style:normal;">0.000</div>
<div class="t" style="left:21.64px;transform:scaleX(0.87);transform-origin:8.36px 0;top:335px;font-size:7px;letter-spacing:0.000px;color:#2a2a2a;font-weight:normal;font-style:normal;">Clear</div>
<div class="t" style="left:115.35px;transform:scaleX(0.87);transform-origin:26.85px 0;top:335px;font-size:7px;letter-spacing:0.000px;color:#2a2a2a;font-weight:normal;font-style:normal;">Estimate Storage</div>
<div class="t" style="left:50.02px;transform:scaleX(0.9574);transform-origin:0 0;top:371px;font-size:6.6px;letter-spacing:0.000px;color:#2a2a2a;font-weight:bold;font-style:normal;">Extended Detention Storage (optional)</div>
<div class="t" style="left:15.52px;transform:scaleX(0.87);transform-origin:7.98px 0;top:389px;font-size:7px;letter-spacing:0.000px;color:#2a2a2a;font-weight:normal;font-style:normal;">Zone</div>
<div class="t" style="left:60.99px;transform:scaleX(0.87);transform-origin:17.51px 0;top:389px;font-size:7px;letter-spacing:0.000px;color:#2a2a2a;font-weight:normal;font-style:normal;">Description</div>
<div class="t" style="left:138.28px;transform:scaleX(0.87);transform-origin:11.67px 0;top:385px;font-size:7px;letter-spacing:0.000px;color:#2a2a2a;font-weight:normal;font-style:normal;">Volume</div>
<div class="t" style="left:141.98px;transform:scaleX(0.87);transform-origin:7.97px 0;top:393px;font-size:7px;letter-spacing:0.000px;color:#2a2a2a;font-weight:normal;font-style:normal;">(cuft)</div>
<div class="t" style="left:21.55px;transform:scaleX(0.88);transform-origin:1.95px 0;top:407px;font-size:7px;letter-spacing:0.000px;color:#2a2a2a;font-weight:normal;font-style:normal;">1</div>
<div class="t" style="left:70.72px;transform:scaleX(0.87);transform-origin:7.78px 0;top:407px;font-size:7px;letter-spacing:0.000px;color:#2a2a2a;font-weight:normal;font-style:normal;">WQv</div>
<div class="t" style="left:21.55px;transform:scaleX(0.88);transform-origin:1.95px 0;top:420px;font-size:7px;letter-spacing:0.000px;color:#2a2a2a;font-weight:normal;font-style:normal;">2</div>
<div class="t" style="left:71.89px;transform:scaleX(0.87);transform-origin:6.61px 0;top:420px;font-size:7px;letter-spacing:0.000px;color:#2a2a2a;font-weight:normal;font-style:normal;">CPv</div>
<div class="t" style="left:21.55px;transform:scaleX(0.88);transform-origin:1.95px 0;top:433px;font-size:7px;letter-spacing:0.000px;color:#2a2a2a;font-weight:normal;font-style:normal;">3</div>
<div class="t" style="left:66.44px;transform:scaleX(0.87);transform-origin:12.06px 0;top:433px;font-size:7px;letter-spacing:0.000px;color:#2a2a2a;font-weight:normal;font-style:normal;">Custom</div>
<div class="t" style="left:21.55px;transform:scaleX(0.88);transform-origin:1.95px 0;top:446px;font-size:7px;letter-spacing:0.000px;color:#2a2a2a;font-weight:normal;font-style:normal;">4</div>
<div class="t" style="left:66.44px;transform:scaleX(0.87);transform-origin:12.06px 0;top:446px;font-size:7px;letter-spacing:0.000px;color:#2a2a2a;font-weight:normal;font-style:normal;">Custom</div>
<div class="t" style="left:21.64px;transform:scaleX(0.87);transform-origin:8.36px 0;top:466px;font-size:7px;letter-spacing:0.000px;color:#2a2a2a;font-weight:normal;font-style:normal;">Clear</div>
<div class="t" style="left:133.44px;transform:scaleX(0.87);transform-origin:8.76px 0;top:466px;font-size:7px;letter-spacing:0.000px;color:#2a2a2a;font-weight:normal;font-style:normal;">Apply</div>
<div class="t" style="left:206.71px;top:431px;font-size:7px;letter-spacing:0.000px;color:#444;font-weight:normal;font-style:normal;">0</div>
<div class="t" style="left:206.71px;top:390px;font-size:7px;letter-spacing:0.000px;color:#444;font-weight:normal;font-style:normal;">1</div>
<div class="t" style="left:206.71px;top:349px;font-size:7px;letter-spacing:0.000px;color:#444;font-weight:normal;font-style:normal;">2</div>
<div class="t" style="left:206.71px;top:308px;font-size:7px;letter-spacing:0.000px;color:#444;font-weight:normal;font-style:normal;">3</div>
<div class="t" style="left:206.71px;top:267px;font-size:7px;letter-spacing:0.000px;color:#444;font-weight:normal;font-style:normal;">4</div>
<div class="t" style="left:206.71px;top:226px;font-size:7px;letter-spacing:0.000px;color:#444;font-weight:normal;font-style:normal;">5</div>
<div class="t" style="left:206.71px;top:185px;font-size:7px;letter-spacing:0.000px;color:#444;font-weight:normal;font-style:normal;">6</div>
<div class="t" style="left:206.71px;top:144px;font-size:7px;letter-spacing:0.000px;color:#444;font-weight:normal;font-style:normal;">7</div>
<div class="t" style="left:206.71px;top:103px;font-size:7px;letter-spacing:0.000px;color:#444;font-weight:normal;font-style:normal;">8</div>
<div class="t" style="left:212.45px;top:438px;font-size:7px;letter-spacing:0.000px;color:#444;font-weight:normal;font-style:normal;">0</div>
<div class="t" style="left:282.91px;top:438px;font-size:7px;letter-spacing:0.000px;color:#444;font-weight:normal;font-style:normal;">1</div>
<div class="t" style="left:353.37px;top:438px;font-size:7px;letter-spacing:0.000px;color:#444;font-weight:normal;font-style:normal;">2</div>
<div class="t" style="left:423.83px;top:438px;font-size:7px;letter-spacing:0.000px;color:#444;font-weight:normal;font-style:normal;">3</div>
<div class="t" style="left:494.29px;top:438px;font-size:7px;letter-spacing:0.000px;color:#444;font-weight:normal;font-style:normal;">4</div>
<div class="t" style="left:564.75px;top:438px;font-size:7px;letter-spacing:0.000px;color:#444;font-weight:normal;font-style:normal;">5</div>
<div class="t" style="left:635.21px;top:438px;font-size:7px;letter-spacing:0.000px;color:#444;font-weight:normal;font-style:normal;">6</div>
<div class="t" style="left:705.67px;top:438px;font-size:7px;letter-spacing:0.000px;color:#444;font-weight:normal;font-style:normal;">7</div>
<div class="t" style="left:447.48px;transform:scaleX(0.9340);transform-origin:0 0;top:448px;font-size:6.6px;letter-spacing:0.000px;color:#2a2a2a;font-weight:normal;font-style:normal;">Time (hrs)</div>
<div class="t" style="left:373.32px;transform:scaleX(0.9776);transform-origin:0 0;top:94px;font-size:7.4px;letter-spacing:0.000px;color:#555;font-weight:normal;font-style:normal;">Pre Dev - 2-yr, Qp = 7.32 | Est'd Stor = 0.000 cuft</div>
<div class="t" style="left:727.01px;transform:scaleX(0.8972);transform-origin:0 0;top:99px;font-size:6.8px;letter-spacing:0.000px;color:#2a2a2a;font-weight:normal;font-style:normal;">Post-Dev</div>
<div class="t" style="left:194.65px;transform:scaleX(0.9475);transform-origin:0 0;top:466px;font-size:7.4px;letter-spacing:0.000px;color:#e2e9f0;font-weight:normal;font-style:italic;">*Estimate Storage Step is Optional</div>
<div class="t" style="left:615.00px;transform:scaleX(0.9990);transform-origin:0 0;top:470px;font-size:7.2px;letter-spacing:0.000px;color:#f2f5f8;font-weight:normal;font-style:normal;">Always skip this step</div>
<div class="t" style="left:705.49px;transform:scaleX(0.9055);transform-origin:0 0;top:471px;font-size:6.8px;letter-spacing:0.000px;color:#222;font-weight:normal;font-style:normal;">Create Pond &gt;</div>
<div class="t" style="left:179.8px;top:266.8px;width:40px;text-align:center;font-size:6.4px;letter-spacing:-0.1px;color:#333;transform:rotate(-90deg);transform-origin:20px 3.2px">Q (cfs)</div>
</body></html>
